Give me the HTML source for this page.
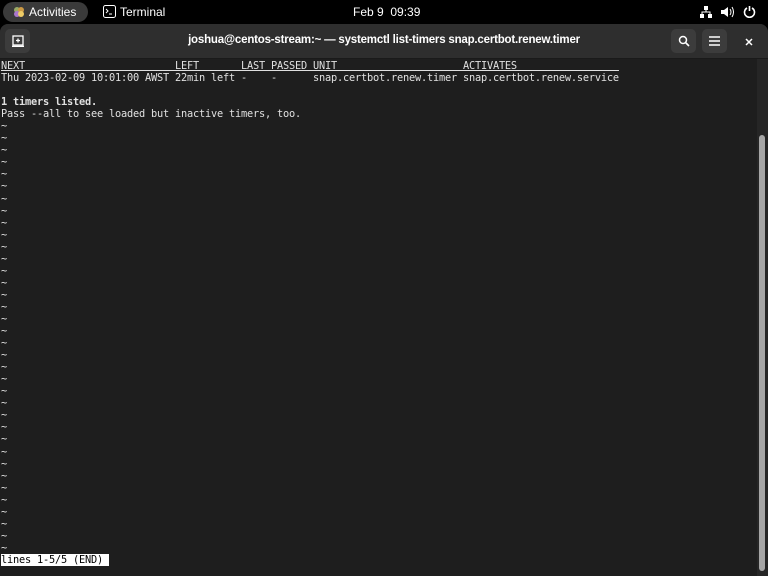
<!DOCTYPE html>
<html><head><style>
*{margin:0;padding:0;box-sizing:border-box}
body{width:768px;height:576px;background:#000;overflow:hidden;font-family:"Liberation Sans","DejaVu Sans",sans-serif;position:relative}
.top{position:absolute;left:0;top:0;width:768px;height:24px;background:#000;color:#fff;font-size:12px}
.act{position:absolute;left:3px;top:2px;width:85px;height:20px;border-radius:10px;background:#3a3a3a;}
.act span{position:absolute;left:26px;top:3px;font-size:12px}
.win{position:absolute;left:0;top:24px;width:768px;height:552px;background:#1e1e1e;border-radius:8px 8px 0 0;overflow:hidden}
.hdr{position:absolute;left:0;top:0;width:768px;height:35px;background:#2e2e2e;border-bottom:1px solid #1a1a1a}
.btn{position:absolute;top:5px;width:25px;height:24px;border-radius:5px;background:#3c3c3c}
.title{position:absolute;left:0;right:0;top:10px;text-align:center;color:#fff;font-weight:bold;font-size:11.5px;letter-spacing:-0.2px}
.term{position:absolute;left:1px;top:36px;font-family:"DejaVu Sans Mono",monospace;font-size:10.3px;line-height:12.05px;letter-spacing:-0.2px;color:#e0e0e0;white-space:pre}
.u{text-decoration:underline}
.sb{position:absolute;left:757px;top:35px;width:11px;height:517px;background:#262626}
.th{position:absolute;left:759px;top:111px;width:6px;height:436px;border-radius:3px;background:#a6a6a6}
.st{background:#fff;color:#000}
</style></head><body>
<div class="top">
<div class="act"><svg style="position:absolute;left:10px;top:4px" width="12" height="12" viewBox="0 0 12 12"><circle cx="4" cy="4" r="3" fill="#9a6"/><circle cx="8" cy="4" r="3" fill="#c94"/><circle cx="4" cy="8" r="3" fill="#a7c"/><circle cx="8" cy="8" r="3" fill="#ec6"/></svg><span>Activities</span></div>
<svg style="position:absolute;left:103px;top:5px" width="13" height="13" viewBox="0 0 13 13"><rect x="0.5" y="0.5" width="12" height="12" rx="2" fill="none" stroke="#fff"/><path d="M3 4l2 2-2 2M6 9h3" stroke="#fff" fill="none"/></svg>
<span style="position:absolute;left:120px;top:5px">Terminal</span>
<span style="position:absolute;left:353px;top:5px">Feb 9&nbsp; 09:39</span>
<svg style="position:absolute;left:700px;top:6px" width="12" height="12" viewBox="0 0 12 12"><rect x="4" y="0" width="4" height="4" fill="#fff"/><rect x="0" y="8" width="4" height="4" fill="#fff"/><rect x="8" y="8" width="4" height="4" fill="#fff"/><path d="M6 4v2M2 8V6h8v2" stroke="#fff" fill="none"/></svg>
<svg style="position:absolute;left:721px;top:6px" width="13" height="12" viewBox="0 0 13 12"><path d="M0 4h3l4-3v10L3 8H0z" fill="#fff"/><path d="M9 3q2 3 0 6M11 1q3 5 0 10" stroke="#fff" fill="none"/></svg>
<svg style="position:absolute;left:743px;top:5px" width="13" height="13" viewBox="0 0 13 13"><path d="M4 3a5 5 0 1 0 5 0M6.5 1v5" stroke="#fff" stroke-width="1.6" fill="none"/></svg>
</div>
<div class="win">
<div class="hdr">
<div class="btn" style="left:5px"><svg style="position:absolute;left:7px;top:6px" width="12" height="12" viewBox="0 0 12 12"><rect x="1" y="1" width="10" height="9" fill="none" stroke="#fff" stroke-width="1.3"/><path d="M6 3.5v4M4 5.5h4M0 11.3h12" stroke="#fff" stroke-width="1.3"/></svg></div>
<div class="title">joshua@centos-stream:~ — systemctl list-timers snap.certbot.renew.timer</div>
<div class="btn" style="left:671px"><svg style="position:absolute;left:7px;top:6px" width="12" height="12" viewBox="0 0 12 12"><circle cx="5" cy="5" r="3.5" stroke="#fff" stroke-width="1.5" fill="none"/><path d="M7.5 7.5l3.5 3.5" stroke="#fff" stroke-width="1.6"/></svg></div>
<div class="btn" style="left:702px"><svg style="position:absolute;left:7px;top:7px" width="11" height="10" viewBox="0 0 11 10"><path d="M0 1h11M0 5h11M0 9h11" stroke="#fff" stroke-width="1.4"/></svg></div>
<svg style="position:absolute;left:745px;top:14px" width="8" height="8" viewBox="0 0 8 8"><path d="M1 1l6 6M7 1l-6 6" stroke="#fff" stroke-width="1.5"/></svg>
</div>
<div class="term"><span class="u">NEXT                         LEFT       LAST PASSED UNIT                     ACTIVATES                 </span>
Thu 2023-02-09 10:01:00 AWST 22min left -    -      snap.certbot.renew.timer snap.certbot.renew.service

<b>1 timers listed.</b>
Pass --all to see loaded but inactive timers, too.
~
~
~
~
~
~
~
~
~
~
~
~
~
~
~
~
~
~
~
~
~
~
~
~
~
~
~
~
~
~
~
~
~
~
~
~
<span class="st">lines 1-5/5 (END) </span></div>
<div class="sb"></div><div class="th"></div>
</div>
</body></html>
